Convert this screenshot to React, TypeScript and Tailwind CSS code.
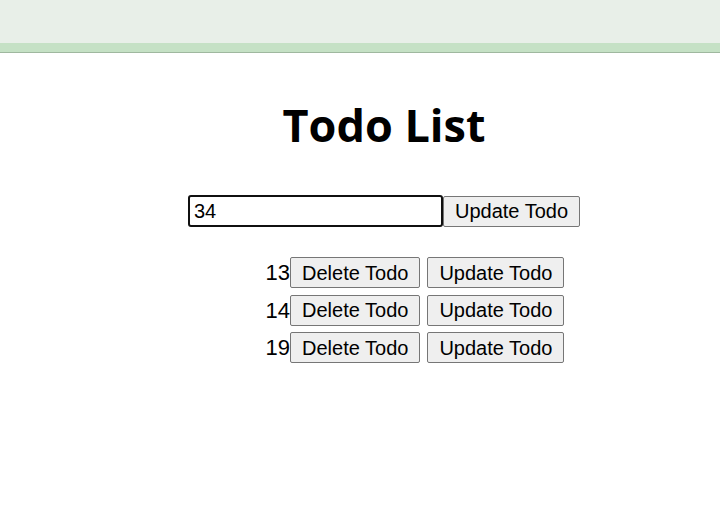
const todos = [13, 14, 19];

export default function App() {
  return (
    <div className="min-h-[531px] bg-white font-['Open_Sans',sans-serif] text-black">
      {/* top band */}
      <div className="h-[43px] bg-[#e8efe8]" />
      <div className="h-[9px] bg-[#c5e1c5]" />
      <div className="h-px bg-[#9fb89f]" />

      <div className="flex flex-col items-center pl-[48px]">
        <h1 className="mt-[32px] text-[45px] font-bold leading-[80px]">Todo List</h1>

        <div className="mt-[30px] flex items-center">
          <input
            type="text"
            defaultValue="34"
            className="h-[32px] w-[255px] rounded-[3px] border-2 border-[#101010] px-[4px] font-['Liberation_Sans',sans-serif] text-[20px] outline-none"
          />
          <button className="h-[31px] rounded-[2px] border border-[#767676] bg-[#efefef] px-[11px] font-['Liberation_Sans',sans-serif] text-[20px] leading-none">
            Update Todo
          </button>
        </div>

        <ul className="mt-[30px] flex flex-col gap-[6.5px] pl-[62px]">
          {todos.map((t) => (
            <li key={t} className="flex h-[31px] items-center font-['Liberation_Sans',sans-serif] text-[20px]">
              <span className="text-[22px] leading-[31px]">{t}</span>
              <button className="h-[31px] rounded-[2px] border border-[#767676] bg-[#efefef] px-[11px] leading-none">
                Delete Todo
              </button>
              <button className="ml-[7px] h-[31px] rounded-[2px] border border-[#767676] bg-[#efefef] px-[11px] leading-none">
                Update Todo
              </button>
            </li>
          ))}
        </ul>
      </div>
    </div>
  );
}
